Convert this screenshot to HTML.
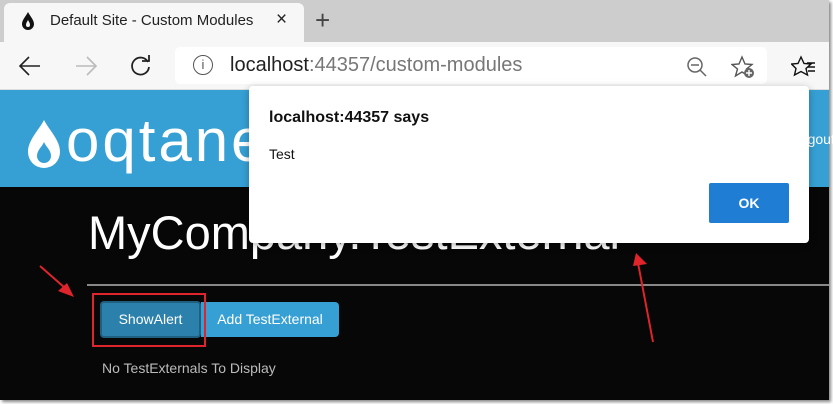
<!DOCTYPE html>
<html><head><style>
*{margin:0;padding:0;box-sizing:border-box}
body{width:833px;height:404px;background:#fff;font-family:"Liberation Sans",sans-serif;position:relative;overflow:hidden}
.a{position:absolute}
</style></head><body>
<div class="a" style="left:0;top:0;width:829px;height:400px;background:#070707;box-shadow:2px 2px 3px #888"></div>
<div class="a" style="left:0;top:0;width:829px;height:42px;background:#cdcdcd"></div>
<div class="a" style="left:4px;top:3px;width:300px;height:40px;background:#f7f7f7;border-radius:6px 6px 0 0"></div>
<svg class="a" style="left:20px;top:11px" width="16" height="20" viewBox="0 0 16 20"><path d="M8 1 C6 5 2 9 2 13 A6 6 0 0 0 14 13 C14 9 10 5 8 1Z" fill="#111"/><path d="M8 9 C7 11 6 12 6 14 A2 2 0 0 0 10 14 C10 12 9 11 8 9Z" fill="#f7f7f7"/></svg>
<div class="a" style="left:50px;top:12px;font-size:15px;color:#222">Default Site - Custom Modules</div>
<div class="a" style="left:276px;top:9px;font-size:19px;color:#222">×</div>
<div class="a" style="left:315px;top:5px;font-size:26px;color:#444;font-weight:300">+</div>
<div class="a" style="left:0;top:42px;width:829px;height:48px;background:#f7f7f7;border-bottom:1px solid #ddd"></div>
<svg class="a" style="left:18px;top:55px" width="24" height="22"><path d="M2 11H22M11 2L2 11L11 20" stroke="#222" stroke-width="1.6" fill="none"/></svg>
<svg class="a" style="left:74px;top:55px" width="24" height="22"><path d="M2 11H22M13 2L22 11L13 20" stroke="#bbb" stroke-width="1.6" fill="none"/></svg>
<svg class="a" style="left:129px;top:54px" width="24" height="24"><path d="M19 8A8.5 8.5 0 1 0 20 13" stroke="#222" stroke-width="1.8" fill="none"/><path d="M13 7H20V1" stroke="#222" stroke-width="1.8" fill="none"/></svg>
<div class="a" style="left:175px;top:47px;width:592px;height:37px;background:#fff;border-radius:5px"></div>
<div class="a" style="left:193px;top:55px;width:20px;height:20px;border:1.5px solid #555;border-radius:50%;font-size:13px;text-align:center;line-height:17px;color:#555">i</div>
<div class="a" style="left:230px;top:54px;font-size:20px;color:#222">localhost<span style="color:#777">:44357/custom-modules</span></div>
<svg class="a" style="left:686px;top:56px" width="22" height="22"><circle cx="9" cy="9" r="7" stroke="#666" stroke-width="1.5" fill="none"/><path d="M5 9H13M14 14L20 20" stroke="#666" stroke-width="1.5"/></svg>
<svg class="a" style="left:731px;top:55px" width="26" height="24"><path d="M11 2L14 9L21 9.5L15.5 14L17.5 21L11 17L4.5 21L6.5 14L1 9.5L8 9Z" stroke="#555" stroke-width="1.4" fill="none"/><circle cx="18" cy="18" r="5" fill="#666"/><path d="M18 15V21M15 18H21" stroke="#fff" stroke-width="1.4"/></svg>
<svg class="a" style="left:791px;top:55px" width="26" height="22"><path d="M10 2L13 8.5L20 9L15 13.5L16.5 20L10 16.5L3.5 20L5 13.5L0.5 9L7 8.5Z" stroke="#111" stroke-width="1.4" fill="none"/><path d="M16 8H24M17 12H24M17 16H24" stroke="#111" stroke-width="1.4"/></svg>
<div class="a" style="left:0;top:90px;width:829px;height:97px;background:#36a0d4"></div>
<svg class="a" style="left:24px;top:118px" width="40" height="55"><path d="M20 2C15 12 4 22 4 34A16 16 0 0 0 36 34C36 22 25 12 20 2Z" fill="#fff"/><path d="M20 24C18 29 13 32 13 38A7 7 0 0 0 27 38C27 32 22 29 20 24Z" fill="#36a0d4"/></svg>
<div class="a" style="left:66px;top:106px;font-size:60px;color:#fff;letter-spacing:3px">oqtane</div>
<div class="a" style="left:792px;top:131px;font-size:14px;color:#fff">Logout</div>
<div class="a" style="left:88px;top:205px;font-size:47px;color:#fff;white-space:nowrap">MyCompany.TestExternal</div>
<div class="a" style="left:87px;top:284px;width:742px;height:2px;background:#888"></div>
<div class="a" style="left:100px;top:301px;width:101px;height:37px;background:#2b80ac;border:2px solid #1f5f80;border-radius:4px;color:#fff;font-size:14px;text-align:center;line-height:33px">ShowAlert</div>
<div class="a" style="left:201px;top:302px;width:138px;height:35px;background:#36a0d4;border-radius:0 4px 4px 0;color:#fff;font-size:14px;text-align:center;line-height:35px">Add TestExternal</div>
<div class="a" style="left:92px;top:293px;width:114px;height:54px;border:2px solid #e0242b"></div>
<div class="a" style="left:102px;top:360px;font-size:14px;color:#bbb">No TestExternals To Display</div>
<svg class="a" style="left:0;top:0" width="833" height="404"><path d="M40 266L65 288" stroke="#e0242b" stroke-width="2"/><path d="M74 297L58 291L67 283Z" fill="#e0242b"/><path d="M653 342L638 263" stroke="#e0242b" stroke-width="2"/><path d="M636 253L647 264L633 266Z" fill="#e0242b"/></svg>
<div class="a" style="left:249px;top:86px;width:560px;height:157px;background:#fff;border-radius:4px;box-shadow:0 2px 8px rgba(0,0,0,.3)"></div>
<div class="a" style="left:269px;top:109px;font-size:16px;font-weight:bold;color:#111">localhost:44357 says</div>
<div class="a" style="left:269px;top:146px;font-size:14px;color:#111">Test</div>
<div class="a" style="left:709px;top:183px;width:80px;height:40px;background:#1f7ed4;border-radius:2px;color:#fff;font-size:14px;font-weight:bold;text-align:center;line-height:40px">OK</div>
</body></html>
